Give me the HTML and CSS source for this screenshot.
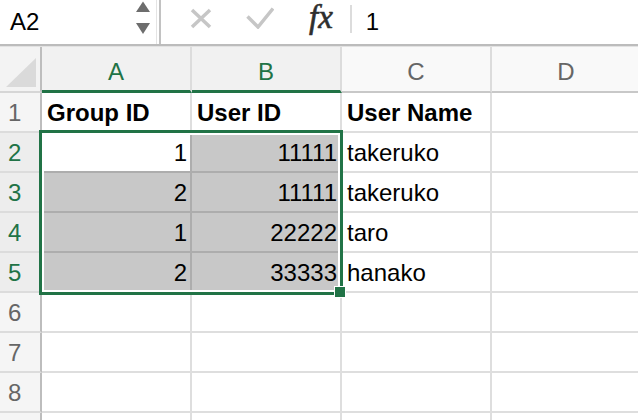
FILE: index.html
```html
<!DOCTYPE html>
<html>
<head>
<meta charset="utf-8">
<link rel="stylesheet" href="styles.css">
</head>
<body>
<div class="app">
  <div class="fbar">
    <div class="namebox">A2</div>
    <svg class="spin" width="14" height="36" viewBox="0 0 14 36"><polygon points="0,12 14,12 7,1.5"/><polygon points="0,23 14,23 7,34"/></svg>
    <div class="vsep"></div>
    <svg class="ic-x" width="22" height="21" viewBox="0 0 22 21"><path d="M2 2 L20 19 M20 2 L2 19"/></svg>
    <svg class="ic-check" width="28" height="22" viewBox="0 0 28 22"><path d="M1.5 9.5 L12 20 L27 1.5"/></svg>
    <span class="fx">fx</span>
    <div class="fsep"></div>
    <div class="fval">1</div>
  </div>
  <div class="fbar-rule"></div>
  <div class="sheet">
    <div class="grid">
      <div class="corner"><div class="tri"></div></div>
      <div class="colhead on">A</div>
      <div class="colhead on">B</div>
      <div class="colhead">C</div>
      <div class="colhead">D</div>

      <div class="rowhead">1</div>
      <div class="cell b">Group ID</div>
      <div class="cell b">User ID</div>
      <div class="cell b">User Name</div>
      <div class="cell"></div>

      <div class="rowhead on">2</div>
      <div class="cell num active">1</div>
      <div class="cell num sel">11111</div>
      <div class="cell">takeruko</div>
      <div class="cell"></div>

      <div class="rowhead on">3</div>
      <div class="cell num sel">2</div>
      <div class="cell num sel">11111</div>
      <div class="cell">takeruko</div>
      <div class="cell"></div>

      <div class="rowhead on">4</div>
      <div class="cell num sel">1</div>
      <div class="cell num sel">22222</div>
      <div class="cell">taro</div>
      <div class="cell"></div>

      <div class="rowhead on">5</div>
      <div class="cell num sel">2</div>
      <div class="cell num sel">33333</div>
      <div class="cell">hanako</div>
      <div class="cell"></div>

      <div class="rowhead">6</div>
      <div class="cell"></div><div class="cell"></div><div class="cell"></div><div class="cell"></div>

      <div class="rowhead">7</div>
      <div class="cell"></div><div class="cell"></div><div class="cell"></div><div class="cell"></div>

      <div class="rowhead">8</div>
      <div class="cell"></div><div class="cell"></div><div class="cell"></div><div class="cell"></div>

      <div class="rowhead"></div>
      <div class="cell"></div><div class="cell"></div><div class="cell"></div><div class="cell"></div>
    </div>
    <div class="selection"></div>
    <div class="handle"></div>
  </div>
</div>
</body>
</html>
```

FILE: styles.css
```css
html, body {
  margin: 0;
  padding: 0;
  background: #ffffff;
}
body {
  width: 638px;
  height: 420px;
  overflow: hidden;
  font-family: "Liberation Sans", Arial, sans-serif;
  color: #000;
}
.app {
  width: 638px;
  height: 420px;
  overflow: hidden;
}

/* ---------- formula bar ---------- */
.fbar {
  display: flex;
  align-items: flex-start;
  height: 44px;
  border-bottom: 2px solid #bcbcbc;
  box-sizing: content-box;
}
.namebox {
  box-sizing: border-box;
  width: 136px;
  padding-left: 10px;
  font-size: 24px;
  line-height: 44px;
}
.spin {
  display: block;
  fill: #6d6d6d;
}
.vsep {
  box-sizing: border-box;
  width: 5px;
  height: 44px;
  margin-left: 6px;
  border-left: 1px solid #e4e4e4;
  border-right: 2px solid #c2c2c2;
}
.ic-x {
  display: block;
  margin-left: 29px;
  margin-top: 8px;
  fill: none;
  stroke: #c6c6c6;
  stroke-width: 3.5;
}
.ic-check {
  display: block;
  margin-left: 34px;
  margin-top: 7px;
  fill: none;
  stroke: #c6c6c6;
  stroke-width: 3.5;
}
.fx {
  margin-left: 35px;
  font-family: "Liberation Serif", "Times New Roman", serif;
  font-style: italic;
  font-size: 33px;
  line-height: 34px;
  color: #2e2e2e;
  -webkit-text-stroke: 0.6px #2e2e2e;
}
.fsep {
  width: 2px;
  height: 28px;
  margin-top: 5px;
  margin-left: 17px;
  background: #dcdcdc;
}
.fval {
  margin-left: 14px;
  font-size: 24px;
  line-height: 44px;
}
.fbar-rule {
  height: 1px;
  background: #e2e2e2;
}

/* ---------- sheet ---------- */
.sheet {
  position: relative;
  width: 638px;
  overflow: hidden;
}
.grid {
  display: grid;
  grid-template-columns: 42px 150px 150px 150px 150px;
  grid-template-rows: 46px repeat(9, 40px);
  width: 642px;
  font-size: 24px;
}
.grid > div {
  box-sizing: border-box;
  white-space: nowrap;
  overflow: hidden;
}
.corner {
  display: flex;
  justify-content: flex-end;
  align-items: flex-end;
  padding: 0 4px 4px 0;
  background: #f3f3f3;
  border-right: 2px solid #bdbdbd;
  border-bottom: 2px solid #d6d6d6;
}
.tri {
  width: 30px;
  height: 29px;
  background: #dadada;
  clip-path: polygon(100% 0, 100% 100%, 0 100%);
}
.colhead {
  text-align: center;
  padding-top: 10px;
  line-height: 30px;
  color: #666;
  background: #f9f9f9;
  border-right: 2px solid #dcdcdc;
  border-bottom: 2px solid #c8c8c8;
}
.colhead.on {
  color: #217346;
  background: #f1f1f1;
  border-bottom: 3px solid #217346;
}
.rowhead {
  padding: 5px 0 0 8px;
  line-height: 30px;
  color: #666;
  background: #f5f5f5;
  border-right: 2px solid #bdbdbd;
  border-bottom: 2px solid #dcdcdc;
}
.rowhead.on {
  color: #217346;
  background: #ededed;
}
.cell {
  padding: 5px 3px 0 5px;
  line-height: 30px;
  background: #fff;
  border-right: 2px solid #dedede;
  border-bottom: 2px solid #dedede;
}
.cell.b {
  font-weight: bold;
}
.cell.num {
  text-align: right;
}
.cell.sel {
  background: #c8c8c8;
  border-color: #adadad;
}
.cell.active {
  background: #fff;
  border-color: #adadad;
}

/* selection overlay */
.selection {
  position: absolute;
  left: 39px;
  top: 83px;
  width: 304px;
  height: 165px;
  box-sizing: border-box;
  border: 3px solid #217346;
  box-shadow: inset 0 0 0 2px #fff;
}
.handle {
  position: absolute;
  left: 334px;
  top: 239px;
  width: 10px;
  height: 10px;
  background: #217346;
  border: 1px solid #fff;
}
```
